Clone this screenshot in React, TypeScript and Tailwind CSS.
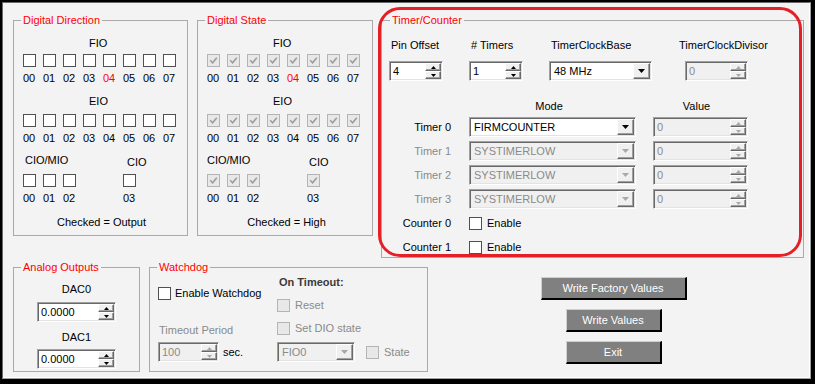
import React from 'react';
import clsx from 'clsx';

const sunken =
  'border border-t-[#a0a0a0] border-l-[#a0a0a0] border-r-white border-b-white shadow-[inset_1px_1px_0_#696969,inset_-1px_-1px_0_#e3e3e3]';
const raised =
  'border border-t-white border-l-white border-r-[#696969] border-b-[#696969] bg-[#f0f0f0] shadow-[inset_-1px_-1px_0_#a0a0a0]';

const Check: React.FC<{ checked?: boolean; disabled?: boolean }> = ({ checked, disabled }) => (
  <span
    className={clsx(
      'flex h-[13px] w-[13px] shrink-0 items-center justify-center border',
      disabled ? 'border-[#b4b4b4] bg-[#e8e8e8]' : 'border-[#505050] bg-white',
    )}
  >
    {checked && (
      <svg width="9" height="9" viewBox="0 0 9 9">
        <path
          d="M1.2 4.3 L3.6 6.8 L7.8 1.8"
          stroke={disabled ? '#9a9a9a' : '#000'}
          strokeWidth="1.5"
          fill="none"
        />
      </svg>
    )}
  </span>
);

const Spin: React.FC<{ value: string; width: string; disabled?: boolean }> = ({ value, width, disabled }) => (
  <div className={clsx('flex h-[20px] p-[1px]', sunken, width, disabled ? 'bg-[#f0f0f0]' : 'bg-white')}>
    <span className={clsx('flex-1 pl-[2px] leading-[16px]', disabled && 'text-[#8a8a8a]')}>{value}</span>
    <div className="flex w-[16px] flex-col">
      {[0, 1].map((i) => (
        <span key={i} className={clsx('flex flex-1 items-center justify-center', raised)}>
          <svg width="5" height="3" viewBox="0 0 5 3">
            <path
              d={i === 0 ? 'M2.5 0 L5 3 L0 3 Z' : 'M0 0 L5 0 L2.5 3 Z'}
              fill={disabled ? '#a8a8a8' : '#000'}
            />
          </svg>
        </span>
      ))}
    </div>
  </div>
);

const Combo: React.FC<{ value: string; width: string; disabled?: boolean }> = ({ value, width, disabled }) => (
  <div className={clsx('flex h-[20px] p-[1px]', sunken, width, disabled ? 'bg-[#f0f0f0]' : 'bg-white')}>
    <span className={clsx('flex-1 pl-[3px] leading-[16px]', disabled && 'text-[#8a8a8a]')}>{value}</span>
    <span className={clsx('flex w-[17px] items-center justify-center', raised)}>
      <svg width="7" height="4" viewBox="0 0 7 4">
        <path d="M0 0 L7 0 L3.5 4 Z" fill={disabled ? '#a8a8a8' : '#000'} />
      </svg>
    </span>
  </div>
);

const Group: React.FC<{ title: string; className: string; legendClass?: string; children: React.ReactNode }> = ({
  title,
  className,
  legendClass = 'ml-[7px]',
  children,
}) => (
  <fieldset className={clsx('border border-[#a9a9a9]', className)}>
    <legend className={clsx('px-[2px] leading-[13px] text-[#ff0000]', legendClass)}>{title}</legend>
    <div className="flex flex-col">{children}</div>
  </fieldset>
);

const bits = ['00', '01', '02', '03', '04', '05', '06', '07'];

const BitRow: React.FC<{ cols: (string | null)[]; state?: boolean; redIndex?: number; top: string }> = ({
  cols,
  state,
  redIndex,
  top,
}) => (
  <div className={clsx('flex flex-col pl-[9px]', top)}>
    <div className="grid grid-cols-[repeat(8,20px)]">
      {cols.map((c, i) => (
        <span key={i}>{c && <Check checked={state} disabled={state} />}</span>
      ))}
    </div>
    <div className="mt-[5px] grid grid-cols-[repeat(8,20px)] leading-[13px]">
      {cols.map((c, i) => (
        <span key={i} className={clsx(i === redIndex && 'text-[#ff0000]')}>
          {c}
        </span>
      ))}
    </div>
  </div>
);

const DigitalBox: React.FC<{
  title: string;
  width: string;
  state?: boolean;
  footer: string;
  cioPad: string;
  cioWidth: string;
  footerPad: string;
}> = ({ title, width, state, footer, cioPad, cioWidth, footerPad }) => (
  <Group title={title} className={clsx('h-[222px]', width)}>
    <div className="mt-[10px] pl-[75px] leading-[13px]">FIO</div>
    <BitRow cols={bits} state={state} redIndex={4} top="mt-[4px]" />
    <div className="mt-[10px] pl-[75px] leading-[13px]">EIO</div>
    <BitRow cols={bits} state={state} top="mt-[6px]" />
    <div className="mt-[9px] flex items-start leading-[13px]">
      <span className={clsx(cioPad, cioWidth)}>CIO/MIO</span>
      <span className="pt-[2px]">CIO</span>
    </div>
    <BitRow cols={['00', '01', '02', null, null, '03', null, null]} state={state} top="mt-[5px]" />
    <div className={clsx('mt-[11px] text-center leading-[13px]', footerPad)}>{footer}</div>
  </Group>
);

const TimerRow: React.FC<{ label: string; mode: string; enabled?: boolean }> = ({ label, mode, enabled }) => (
  <div className="flex h-[20px] items-center">
    <span className={clsx('w-[69px] text-right', !enabled && 'text-[#8a8a8a]')}>{label}</span>
    <div className="ml-[18px]">
      <Combo value={mode} width="w-[167px]" disabled={!enabled} />
    </div>
    <div className="ml-[17px]">
      <Spin value="0" width="w-[95px]" disabled />
    </div>
  </div>
);

const CounterRow: React.FC<{ label: string }> = ({ label }) => (
  <div className="flex h-[20px] items-center">
    <span className="w-[69px] text-right">{label}</span>
    <span className="ml-[18px]">
      <Check />
    </span>
    <span className="ml-[5px]">Enable</span>
  </div>
);

const Btn: React.FC<{ label: string; width: string }> = ({ label, width }) => (
  <button
    className={clsx(
      'h-[23px] border-t border-l border-r-2 border-b-2 border-t-[#cfcfcf] border-l-[#cfcfcf] border-r-black border-b-black bg-[#808080] text-center leading-[19px] text-white',
      width,
    )}
  >
    {label}
  </button>
);

export default function App() {
  return (
    <div className="h-[384px] w-[815px] bg-black pl-[2px] pt-[2px] font-['Liberation_Sans',Arial,sans-serif] text-[11px] text-black">
      <div className="h-[377px] w-[809px] border border-t-[#6a6a6a] border-l-[#6a6a6a] border-r-[#a0a0a0] border-b-[#a0a0a0] bg-[#f3f3f3] pl-[10px] pt-[11px] shadow-[inset_-1px_-1px_0_#ffffff]">
        {/* top row */}
        <div className="flex items-start">
          <DigitalBox
            title="Digital Direction"
            width="w-[175px]"
            footer="Checked = Output"
            cioPad="pl-[11px]"
            cioWidth="w-[113px]"
            footerPad="pl-[2px]"
          />
          <div className="ml-[9px]">
            <DigitalBox
              title="Digital State"
              width="w-[176px]"
              state
              footer="Checked = High"
              cioPad="pl-[9px]"
              cioWidth="w-[111px]"
              footerPad="pl-[3px]"
            />
          </div>
          <div className="relative ml-[8px]">
            <Group title="Timer/Counter" className="h-[244px] w-[423px]" legendClass="ml-[8px]">
              <div className="mt-[12px] flex pl-[7px]">
                <div className="w-[80px]">
                  <div className="pl-[2px] leading-[13px]">Pin Offset</div>
                  <div className="mt-[9px]">
                    <Spin value="4" width="w-[54px]" />
                  </div>
                </div>
                <div className="w-[80px]">
                  <div className="pl-[2px] leading-[13px]"># Timers</div>
                  <div className="mt-[9px]">
                    <Spin value="1" width="w-[54px]" />
                  </div>
                </div>
                <div className="w-[130px]">
                  <div className="pl-[2px] leading-[13px]">TimerClockBase</div>
                  <div className="mt-[9px]">
                    <Combo value="48 MHz" width="w-[103px]" />
                  </div>
                </div>
                <div>
                  <div className="leading-[13px]">TimerClockDivisor</div>
                  <div className="ml-[6px] mt-[9px]">
                    <Spin value="0" width="w-[63px]" disabled />
                  </div>
                </div>
              </div>
              <div className="mt-[19px] flex leading-[13px]">
                <span className="ml-[87px] w-[167px] pr-[7px] text-center">Mode</span>
                <span className="ml-[17px] w-[95px] pr-[8px] text-center">Value</span>
              </div>
              <div className="mt-[4px] flex flex-col gap-[4px]">
                <TimerRow label="Timer 0" mode="FIRMCOUNTER" enabled />
                <TimerRow label="Timer 1" mode="SYSTIMERLOW" />
                <TimerRow label="Timer 2" mode="SYSTIMERLOW" />
                <TimerRow label="Timer 3" mode="SYSTIMERLOW" />
                <CounterRow label="Counter 0" />
                <CounterRow label="Counter 1" />
              </div>
            </Group>
            <div className="pointer-events-none absolute left-[-3px] top-[-7px] h-[250px] w-[424px] rounded-[22px] border-[3px] border-[#e41f26]" />
          </div>
        </div>

        {/* bottom row */}
        <div className="mt-[3px] flex items-start">
          <Group title="Analog Outputs" className="h-[111px] w-[127px]">
            <div className="mt-[9px] text-center leading-[13px]">DAC0</div>
            <div className="ml-[23px] mt-[6px]">
              <Spin value="0.0000" width="w-[79px]" />
            </div>
            <div className="mt-[9px] text-center leading-[13px]">DAC1</div>
            <div className="ml-[23px] mt-[5px]">
              <Spin value="0.0000" width="w-[79px]" />
            </div>
          </Group>
          <div className="ml-[9px]">
            <Group title="Watchdog" className="h-[111px] w-[279px]">
              <div className="flex pl-[8px]">
                <div className="flex w-[119px] flex-col">
                  <div className="mt-[13px] flex items-center leading-[13px]">
                    <Check />
                    <span className="ml-[4px]">Enable Watchdog</span>
                  </div>
                  <div className="mt-[24px] pl-[1px] leading-[13px] text-[#8a8a8a]">Timeout Period</div>
                  <div className="mt-[5px] flex items-center">
                    <Spin value="100" width="w-[61px]" disabled />
                    <span className="ml-[4px]">sec.</span>
                  </div>
                </div>
                <div className="flex flex-col">
                  <div className="mt-[2px] pl-[2px] font-bold leading-[13px] text-[#3a3a3a]">On Timeout:</div>
                  <div className="mt-[10px] flex items-center leading-[13px] text-[#8a8a8a]">
                    <Check disabled />
                    <span className="ml-[5px]">Reset</span>
                  </div>
                  <div className="mt-[10px] flex items-center leading-[13px] text-[#8a8a8a]">
                    <Check disabled />
                    <span className="ml-[5px]">Set DIO state</span>
                  </div>
                  <div className="mt-[7px] flex items-center">
                    <Combo value="FIO0" width="w-[78px]" disabled />
                    <span className="ml-[11px]">
                      <Check disabled />
                    </span>
                    <span className="ml-[5px] text-[#8a8a8a]">State</span>
                  </div>
                </div>
              </div>
            </Group>
          </div>
          <div className="flex w-[371px] flex-col items-center gap-[9px] pt-[16px]">
            <Btn label="Write Factory Values" width="w-[146px]" />
            <Btn label="Write Values" width="w-[96px]" />
            <Btn label="Exit" width="w-[96px]" />
          </div>
        </div>
      </div>
    </div>
  );
}
